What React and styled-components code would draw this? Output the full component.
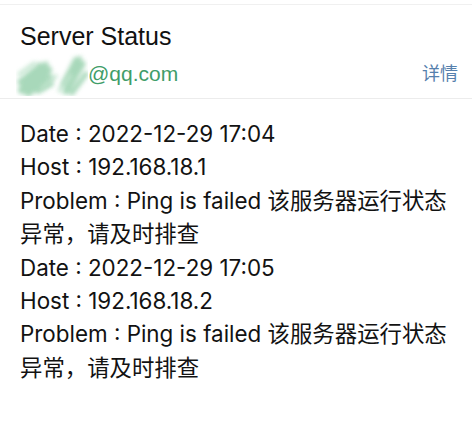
import React from "react";
import styled, { createGlobalStyle } from "styled-components";

const Global = createGlobalStyle`
  html, body { margin: 0; padding: 0; background: #ffffff; }
  body { font-family: Inter, "Noto Sans CJK SC", sans-serif; }
`;

const Card = styled.div`
  width: 474px;
  height: 445px;
  box-sizing: border-box;
  background: #fff;
  padding-top: 4px;
  overflow: hidden;
`;

const Header = styled.header`
  border-top: 1px solid #f0f0f0;
  border-bottom: 1px solid #ececec;
  padding: 17px 14px 10px 20px;
  margin-right: 2px;
`;

const Title = styled.h1`
  margin: 0;
  font-family: "Liberation Sans", Arial, sans-serif;
  font-weight: 400;
  font-size: 25px;
  line-height: 28px;
  color: #111;
`;

const SubRow = styled.div`
  display: flex;
  align-items: center;
  justify-content: space-between;
  height: 28px;
  margin-top: 10px;
`;

const Email = styled.div`
  display: flex;
  align-items: center;
  font-family: "Liberation Sans", Arial, sans-serif;
  font-size: 21px;
  line-height: 28px;
  color: #3f9d69;
`;

const Scribble = styled.svg`
  display: block;
  width: 72px;
  height: 44px;
  margin: -8px 0 -8px -4px;
`;

const Detail = styled.a`
  font-family: "Noto Sans CJK SC", sans-serif;
  font-size: 18px;
  line-height: 28px;
  color: #5680ad;
  text-decoration: none;
  margin-top: -4px;
`;

const Body = styled.main`
  padding: 18px 19px 0 20px;
`;

const Line = styled.p`
  margin: 0;
  font-family: Inter, "Noto Sans CJK SC", sans-serif;
  font-size: 22.4px;
  line-height: 33.4px;
  color: #121212;
`;

const records = [
  { date: "2022-12-29 17:04", host: "192.168.18.1" },
  { date: "2022-12-29 17:05", host: "192.168.18.2" },
];

function BlurredName() {
  return (
    <Scribble viewBox="0 0 72 44" aria-hidden="true">
      <defs>
        <filter id="bl" x="-30%" y="-30%" width="160%" height="160%">
          <feGaussianBlur stdDeviation="2.2" />
        </filter>
      </defs>
      <g filter="url(#bl)" stroke="#93cfa9" strokeLinecap="round" fill="none" opacity="0.8">
        <path d="M5 30 L24 14" strokeWidth="7" />
        <path d="M6 38 L32 18" strokeWidth="8" />
        <path d="M12 41 L34 26" strokeWidth="7" />
        <path d="M14 26 L30 12" strokeWidth="5" />
        <path d="M22 40 L36 32" strokeWidth="4" />
        <path d="M48 32 L60 8" strokeWidth="6" />
        <path d="M50 39 L66 12" strokeWidth="7" />
        <path d="M56 41 L70 22" strokeWidth="5" />
        <path d="M56 20 L64 6" strokeWidth="4" />
      </g>
      <g filter="url(#bl)" stroke="#c2e5cf" strokeLinecap="round" fill="none" opacity="0.8">
        <path d="M4 22 L18 12" strokeWidth="5" />
        <path d="M44 38 L54 24" strokeWidth="5" />
        <path d="M26 36 L40 24" strokeWidth="4" />
      </g>
    </Scribble>
  );
}

export default function App() {
  return (
    <>
      <Global />
      <Card>
        <Header>
          <Title>Server Status</Title>
          <SubRow>
            <Email>
              <BlurredName />
              @qq.com
            </Email>
            <Detail href="#">详情</Detail>
          </SubRow>
        </Header>
        <Body>
          {records.map((r) => (
            <React.Fragment key={r.host}>
              <Line>Date : {r.date}</Line>
              <Line>Host : {r.host}</Line>
              <Line>Problem : Ping is failed 该服务器运行状态异常，请及时排查</Line>
            </React.Fragment>
          ))}
        </Body>
      </Card>
    </>
  );
}
